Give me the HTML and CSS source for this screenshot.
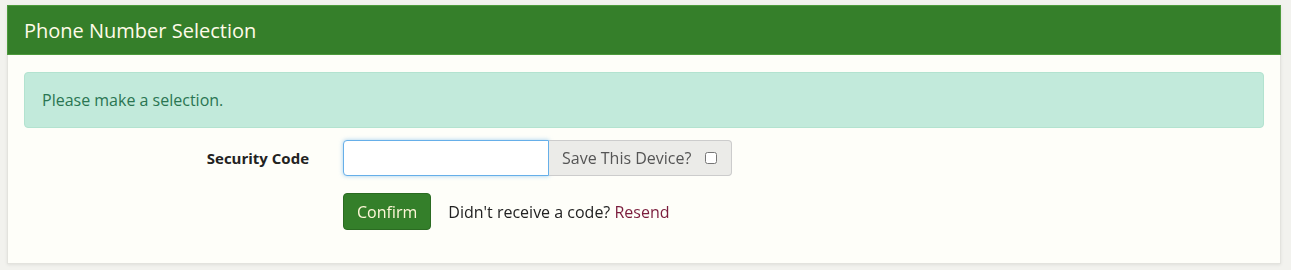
FILE: index.html
```html
<!DOCTYPE html>
<html lang="en">
<head>
  <meta charset="UTF-8" />
  <title>Phone Number Selection</title>
  <link rel="stylesheet" href="styles.css">
</head>
<body>

<div class="panel">
  <div class="panel-heading">Phone Number Selection</div>

  <div class="panel-body">
    <div class="alert">Please make a selection.</div>

    <div class="form-row">
      <label class="form-label" for="code">Security Code</label>
      <div class="input-group">
        <input type="text" id="code" class="form-input" autofocus />
        <label class="input-addon">
          Save This Device?
          <input type="checkbox" />
        </label>
      </div>
    </div>

    <div class="form-row">
      <span class="form-label"></span>
      <div class="actions">
        <button class="btn-confirm">Confirm</button>
        <span class="resend-text">Didn't receive a code? <a href="#">Resend</a></span>
      </div>
    </div>
  </div>
</div>

</body>
</html>
```

FILE: styles.css
```css
* {
  box-sizing: border-box;
}

body {
  margin: 0;
  padding: 5px 10px 6px 7px;
  background: #f2f2ee;
  font-family: "Open Sans", sans-serif;
  font-size: 16px;
  color: #222;
}

.panel {
  background: #fefef9;
  border: 1px solid #e3e3de;
  border-top: none;
  box-shadow: 0 1px 3px rgba(0,0,0,0.08);
  height: 259px;
}

.panel-heading {
  background: #357f2a;
  color: #fffbe8;
  height: 50px;
  padding: 0 16px;
  display: flex;
  align-items: center;
  font-size: 20px;
  border: 1px solid #4d9a3c;
  margin: 0 -1px;
}

.panel-body {
  padding: 17px 16px;
}

.alert {
  background: #c2eadb;
  border: 1px solid #b3e3d0;
  border-radius: 4px;
  color: #2a7552;
  height: 56px;
  padding: 0 17px;
  display: flex;
  align-items: center;
  margin-bottom: 12px;
}

.form-row {
  display: flex;
  align-items: center;
  margin-bottom: 17px;
}

.form-label {
  width: 285px;
  text-align: right;
  font-weight: bold;
  font-size: 15px;
  margin-right: 34px;
  flex-shrink: 0;
}

.input-group {
  display: flex;
  height: 36px;
}

.form-input {
  width: 206px;
  height: 36px;
  border: 1px solid #66afe9;
  border-radius: 4px 0 0 4px;
  box-shadow: 0 0 4px rgba(102,175,233,0.6);
  padding: 0 12px;
  font-family: inherit;
  font-size: 16px;
  outline: none;
  background: #fff;
}

.input-addon {
  display: flex;
  align-items: center;
  gap: 14px;
  background: #ebebe8;
  border: 1px solid #ccc;
  border-left: none;
  border-radius: 0 4px 4px 0;
  padding: 0 14px 0 13px;
  color: #555;
  height: 36px;
}

.input-addon input {
  margin: 0;
  width: 12px;
  height: 12px;
}

.actions {
  display: flex;
  align-items: center;
  gap: 17px;
}

.btn-confirm {
  background: #347f2a;
  color: #fff7d8;
  border: 1px solid #2b6b22;
  border-radius: 4px;
  height: 37px;
  padding: 0 13px;
  font-family: inherit;
  font-size: 16px;
  cursor: pointer;
}

.resend-text a {
  color: #7b1c3c;
  text-decoration: none;
}
```
